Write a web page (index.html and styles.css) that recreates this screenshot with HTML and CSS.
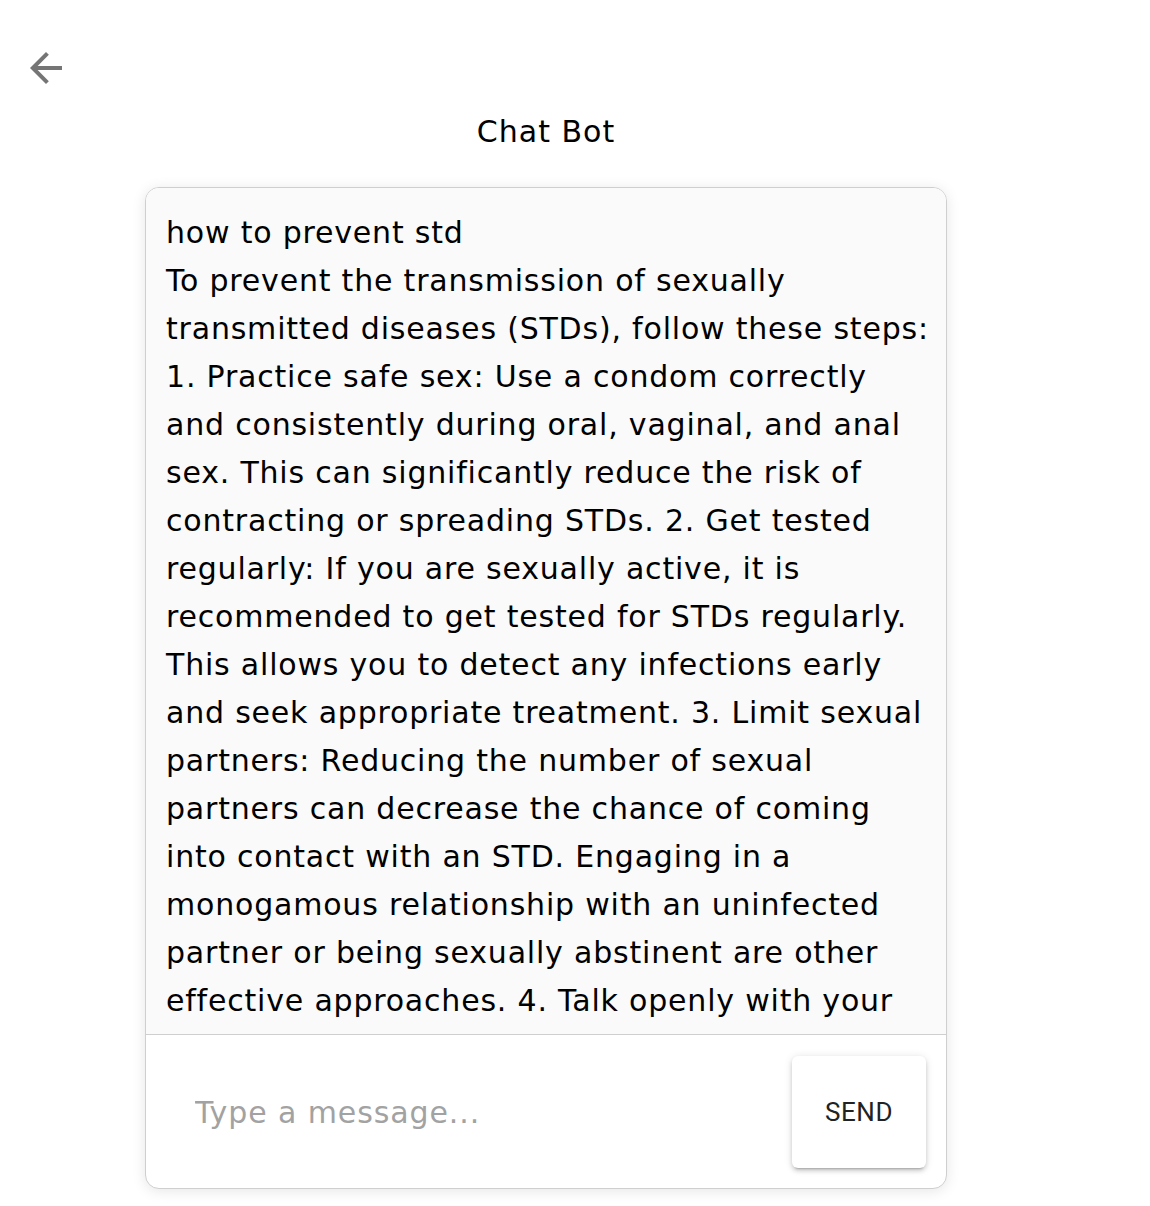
FILE: index.html
```html
<!DOCTYPE html>
<html lang="en">
<head>
<meta charset="utf-8">
<title>Chat Bot</title>
<link rel="stylesheet" href="styles.css">
</head>
<body>
<div class="page">
  <div class="topbar">
    <button class="back" aria-label="Back">
      <svg viewBox="0 0 24 24" width="48" height="48"><path d="M20 11H7.830l5.590-5.590L12 4l-8 8 8 8 1.410-1.410L7.830 13H20v-2z" fill="#757575"/></svg>
    </button>
  </div>
  <div class="main">
    <h1 class="title">Chat Bot</h1>
    <div class="card">
      <div class="messages">
        <div class="msg">how to prevent std</div>
        <div class="msg">To prevent the transmission of sexually<br>transmitted diseases (STDs), follow these steps:<br>1. Practice safe sex: Use a condom correctly<br>and consistently during oral, vaginal, and anal<br>sex. This can significantly reduce the risk of<br>contracting or spreading STDs. 2. Get tested<br>regularly: If you are sexually active, it is<br>recommended to get tested for STDs regularly.<br>This allows you to detect any infections early<br>and seek appropriate treatment. 3. Limit sexual<br>partners: Reducing the number of sexual<br>partners can decrease the chance of coming<br>into contact with an STD. Engaging in a<br>monogamous relationship with an uninfected<br>partner or being sexually abstinent are other<br>effective approaches. 4. Talk openly with your<br>partner(s) about your sexual health and history.</div>
      </div>
      <div class="composer">
        <input class="input" type="text" placeholder="Type a message...">
        <button class="send">SEND</button>
      </div>
    </div>
  </div>
</div>
</body>
</html>
```
FILE: styles.css
```css
html, body {
  margin: 0;
  padding: 0;
  background: #ffffff;
}
body {
  font-family: "DejaVu Sans", "Open Sans", sans-serif;
  color: #000;
}
.page {
  width: 1150px;
  height: 1206px;
  overflow: hidden;
}
.topbar {
  height: 92px;
  padding: 44px 0 0 22px;
  box-sizing: border-box;
  display: flex;
  align-items: flex-start;
}
.back {
  width: 48px;
  height: 48px;
  padding: 0;
  border: 0;
  background: none;
  display: flex;
}
.main {
  width: 802px;
  margin-left: 145px;
  display: flex;
  flex-direction: column;
  align-items: stretch;
}
.title {
  margin: 16px 0 31px 0;
  text-align: center;
  font-weight: 400;
  font-size: 30px;
  line-height: 48px;
  height: 48px;
  letter-spacing: 1px;
}
.card {
  height: 1002px;
  border: 1px solid #cfcfcf;
  border-radius: 14px;
  box-shadow: 0 2px 14px rgba(0,0,0,0.10);
  overflow: hidden;
  display: flex;
  flex-direction: column;
  box-sizing: border-box;
  background: #fff;
}
.messages {
  height: 847px;
  flex: none;
  background: #fafafa;
  padding: 21px 20px 0 20px;
  box-sizing: border-box;
  overflow: hidden;
  border-bottom: 1px solid #cfcfcf;
}
.msg {
  font-size: 30px;
  line-height: 48px;
  letter-spacing: 0.8px;
  white-space: nowrap;
}
.composer {
  flex: 1;
  display: flex;
  align-items: stretch;
  gap: 20px;
  padding: 21px 20px 20px 20px;
  box-sizing: border-box;
}
.input {
  flex: 1;
  min-width: 0;
  border: 0;
  outline: none;
  background: transparent;
  font-family: "DejaVu Sans", "Open Sans", sans-serif;
  font-size: 30px;
  letter-spacing: 0.9px;
  padding: 0 0 0 29px;
  color: #000;
}
.input::placeholder {
  color: #a2a2a2;
}
.send {
  width: 134px;
  flex: none;
  border: 0;
  border-radius: 6px;
  background: #fff;
  font-family: Roboto, sans-serif;
  font-size: 26px;
  font-weight: 400;
  color: #222;
  letter-spacing: 0.6px;
  box-shadow: 0 4px 2px -3px rgba(0,0,0,0.2), 0 3px 4px 0 rgba(0,0,0,0.14), 0 1px 8px 0 rgba(0,0,0,0.12);
}
```
